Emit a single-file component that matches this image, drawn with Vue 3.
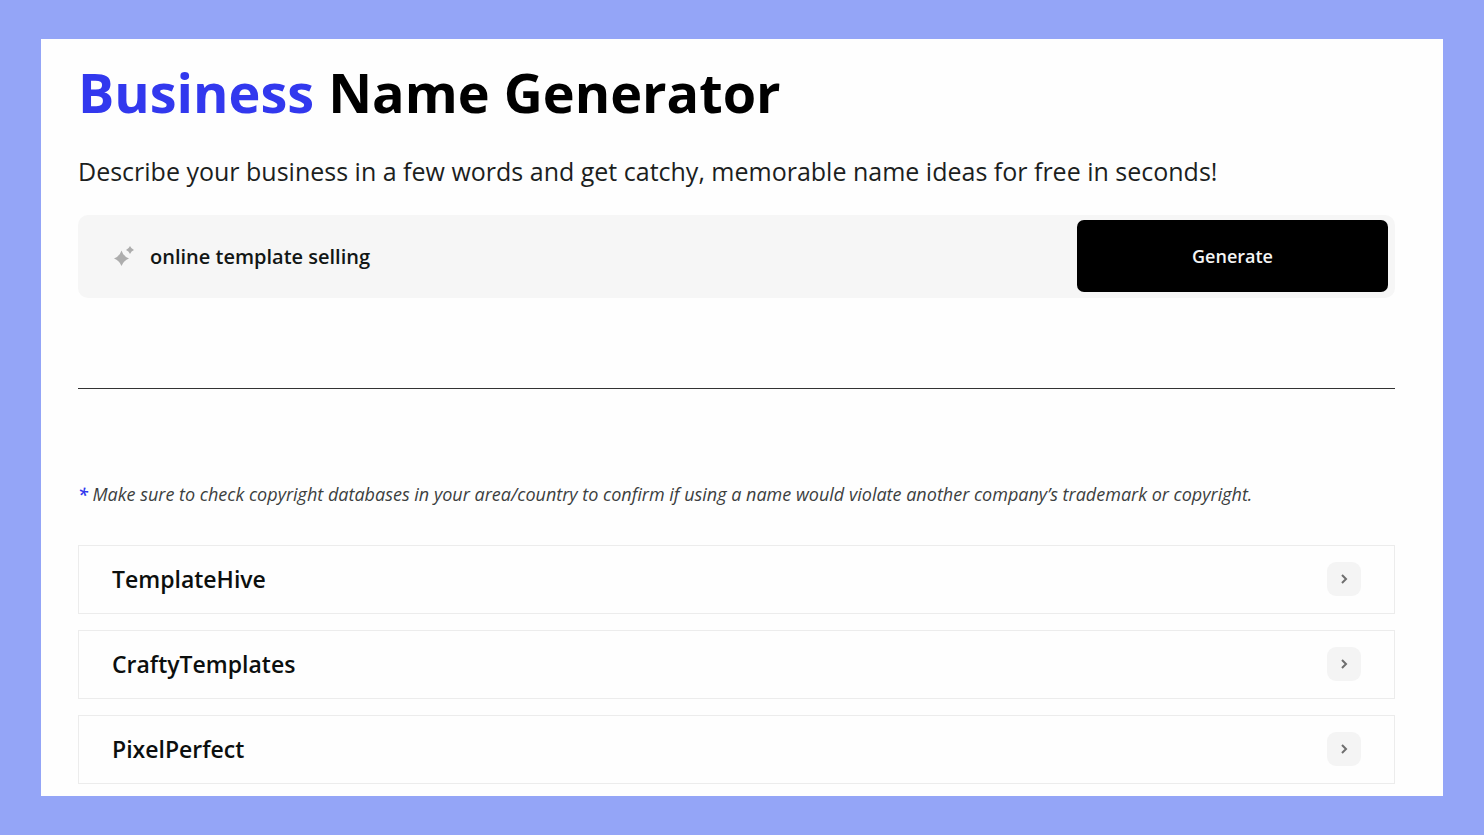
<script setup>
import { ref } from 'vue'

const prompt = ref('online template selling')
const names = ref(['TemplateHive', 'CraftyTemplates', 'PixelPerfect'])
</script>

<template>
  <div class="page">
    <main class="panel">
      <h1 class="title"><span class="accent">Business</span> Name Generator</h1>
      <p class="lead">Describe your business in a few words and get catchy, memorable name ideas for free in seconds!</p>

      <form class="search" @submit.prevent>
        <label class="field">
          <svg class="sparkle" viewBox="0 0 20 20" aria-hidden="true">
            <path d="M7.500 4.500Q9.500 10.500 15 12.500Q9.500 14.500 7.500 20Q5.500 14.500 0 12.500Q5.500 10.500 7.500 4.500Z" />
            <path d="M16 0Q17.200 2.800 20 4Q17.200 5.200 16 8Q14.800 5.200 12 4Q14.800 2.800 16 0Z" />
          </svg>
          <input v-model="prompt" class="input" type="text" aria-label="Business description" />
        </label>
        <button class="generate" type="submit">Generate</button>
      </form>

      <hr class="rule" />

      <p class="note"><span class="star">*</span> Make sure to check copyright databases in your area/country to confirm if using a name would violate another company’s trademark or copyright.</p>

      <ul class="names">
        <li v-for="name in names" :key="name" class="name">
          <span>{{ name }}</span>
          <button class="open" type="button" :aria-label="'Open ' + name">
            <svg class="chevron" viewBox="0 0 8 10" aria-hidden="true">
              <path d="M2 1L6 5L2 9" />
            </svg>
          </button>
        </li>
      </ul>
    </main>
  </div>
</template>

<style>
body {
  margin: 0;
  background: #94a5f7;
}
</style>

<style scoped>
.page {
  box-sizing: border-box;
  min-height: 100vh;
  padding: 39px 41px;
  background: #94a5f7;
  font-family: "Open Sans", "Noto Sans", sans-serif;
}

.panel {
  padding: 21px 48px 12px 37px;
  background: #fefefe;
}

.title {
  margin: 0;
  font-size: 54px;
  line-height: 64px;
  font-weight: 700;
  color: #000;
}

.accent {
  color: #3238ee;
}

.lead {
  margin: 29px 0 0;
  font-size: 25px;
  line-height: 36px;
  color: #1c1f1e;
}

.search {
  display: flex;
  margin-top: 26px;
  padding: 5px 7px 6px 36px;
  border-radius: 10px;
  background: #f6f6f6;
}

.field {
  display: flex;
  flex: 1;
  align-items: center;
  gap: 16px;
}

.sparkle {
  width: 20px;
  height: 20px;
  fill: #adadad;
}

.input {
  flex: 1;
  min-width: 0;
  padding: 2px 0 0;
  border: 0;
  outline: 0;
  background: transparent;
  font: 600 20px/28px "Open Sans", "Noto Sans", sans-serif;
  color: #121615;
}

.generate {
  flex: 0 0 311px;
  height: 72px;
  border: 0;
  border-radius: 7px;
  background: #000;
  color: #f4f4f4;
  font: 600 18px/24px "Open Sans", "Noto Sans", sans-serif;
}

.rule {
  height: 1px;
  margin: 90px 0 0;
  border: 0;
  background: #333;
}

.note {
  margin: 91px 0 0;
  font-size: 18px;
  line-height: 28px;
  font-style: italic;
  color: #3c3f3f;
}

.star {
  color: #3238ee;
  font-weight: 600;
}

.names {
  display: grid;
  gap: 16px;
  margin: 37px 0 0;
  padding: 0;
  list-style: none;
}

.name {
  box-sizing: border-box;
  display: flex;
  align-items: center;
  justify-content: space-between;
  min-height: 69px;
  padding: 15px 33px 17px;
  border: 1px solid #ececec;
  font-size: 23px;
  line-height: 32px;
  font-weight: 600;
  color: #0c0f0e;
}

.open {
  display: grid;
  place-items: center;
  width: 34px;
  height: 34px;
  padding: 0;
  border: 0;
  border-radius: 9px;
  background: #f4f4f4;
}

.chevron {
  width: 8px;
  height: 10px;
  fill: none;
  stroke: #6e6e6e;
  stroke-width: 2;
}
</style>
